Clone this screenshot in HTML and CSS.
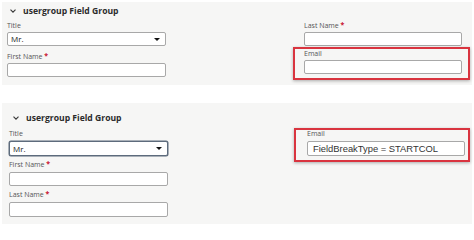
FILE: index.html
```html
<!DOCTYPE html>
<html lang="en">
<head>
<meta charset="utf-8">
<title>usergroup Field Group</title>
<link rel="stylesheet" href="styles.css">
</head>
<body>
<section class="panel panel-a">
  <header class="group-head">
    <svg class="chev" viewBox="0 0 6 4" width="6" height="4"><path d="M0.5 0.6 L3 3.2 L5.5 0.6" fill="none" stroke="#3a3a3a" stroke-width="1.1"/></svg>
    <h2 class="group-title">usergroup Field Group</h2>
  </header>
  <div class="form-grid">
    <div class="col">
      <div class="field">
        <label class="lbl">Title</label>
        <div class="control select"><span class="val">Mr.</span><span class="caret"></span></div>
      </div>
      <div class="field">
        <label class="lbl">First Name <span class="req">*</span></label>
        <div class="control"></div>
      </div>
    </div>
    <div class="col">
      <div class="field">
        <label class="lbl">Last Name <span class="req">*</span></label>
        <div class="control"></div>
      </div>
      <div class="field hl">
        <label class="lbl">Email</label>
        <div class="control"></div>
      </div>
    </div>
  </div>
</section>

<section class="panel panel-b">
  <header class="group-head">
    <svg class="chev" viewBox="0 0 6 4" width="6" height="4"><path d="M0.5 0.6 L3 3.2 L5.5 0.6" fill="none" stroke="#3a3a3a" stroke-width="1.1"/></svg>
    <h2 class="group-title">usergroup Field Group</h2>
  </header>
  <div class="form-grid">
    <div class="col">
      <div class="field">
        <label class="lbl">Title</label>
        <div class="control select focus"><span class="val">Mr.</span><span class="caret"></span></div>
      </div>
      <div class="field">
        <label class="lbl">First Name <span class="req">*</span></label>
        <div class="control"></div>
      </div>
      <div class="field">
        <label class="lbl">Last Name <span class="req">*</span></label>
        <div class="control"></div>
      </div>
    </div>
    <div class="col">
      <div class="field hl">
        <label class="lbl">Email</label>
        <div class="control"><span class="val mono">FieldBreakType = STARTCOL</span></div>
      </div>
    </div>
  </div>
</section>
</body>
</html>
```

FILE: styles.css
```css
html, body {
  margin: 0;
  padding: 0;
  background: #ffffff;
}
body {
  padding-top: 2px;
  font-family: "Open Sans", "Noto Sans", sans-serif;
  color: #333;
}
.panel {
  margin-left: 2px;
  width: 470px;
  background: #f6f6f5;
  box-sizing: border-box;
}
.panel-a {
  height: 83px;
  padding-left: 5px;
}
.panel-b {
  margin-top: 18px;
  height: 121px;
  padding-left: 7px;
}
.group-head {
  display: flex;
  align-items: center;
  gap: 7px;
}
.panel-a .group-head {
  height: 18px;
  padding-left: 3px;
  margin-bottom: 2px;
}
.panel-b .group-head {
  height: 26px;
  padding-left: 4px;
  padding-top: 4px;
  box-sizing: border-box;
  margin-bottom: 1px;
}
.chev {
  display: block;
  flex: none;
}
.group-title {
  margin: 0;
  font-size: 8.6px;
  font-weight: 700;
  color: #2c2c2c;
  line-height: 10px;
}
.form-grid {
  display: grid;
  grid-template-columns: 159px 158px;
  column-gap: 138px;
}
.panel-b .form-grid {
  column-gap: 139px;
}
.col {
  display: flex;
  flex-direction: column;
}
.panel-a .col { gap: 7px; }
.panel-b .col { gap: 5px; }
.field {
  display: flex;
  flex-direction: column;
}
.lbl {
  font-size: 7px;
  line-height: 8px;
  height: 8px;
  color: #555;
  margin-bottom: 2px;
  white-space: nowrap;
}
.panel-b .lbl { margin-bottom: 3px; }
.req {
  color: #c8102e;
  font-weight: 700;
  font-size: 7px;
  position: relative;
  top: -1px;
}
.control {
  height: 14px;
  box-sizing: border-box;
  background: #fff;
  border: 1px solid #a8a8a8;
  border-radius: 2px;
  display: flex;
  align-items: center;
  padding: 0 3px;
}
.panel-b .field:last-child .control { height: 15px; }
.select { justify-content: space-between; padding-right: 5px; }
.select.focus {
  height: 15px;
  border-color: #5d6b7c;
  box-shadow: 0 0 0 0.5px #5d6b7c;
}
.val {
  font-size: 8px;
  color: #222;
  line-height: 10px;
}
.mono {
  font-family: "Liberation Sans", Arial, sans-serif;
  font-size: 9.4px;
  padding-left: 2px;
  color: #333;
}
.caret {
  width: 0;
  height: 0;
  border-left: 3px solid transparent;
  border-right: 3px solid transparent;
  border-top: 3.5px solid #111;
}
.hl {
  border: 2px solid #d9343f;
  box-shadow: 0 1px 3px rgba(0,0,0,0.3);
}
.panel-a .hl {
  margin: -3px -8px 0 -11px;
  padding: 1px 6px 4px 9px;
}
.panel-a .col:last-child { gap: 4px; }
.panel-b .hl {
  margin: -2px -5px 0 -13px;
  padding: 0 3px 4px 11px;
}
.panel-b .hl .control { height: 15px; }
```
